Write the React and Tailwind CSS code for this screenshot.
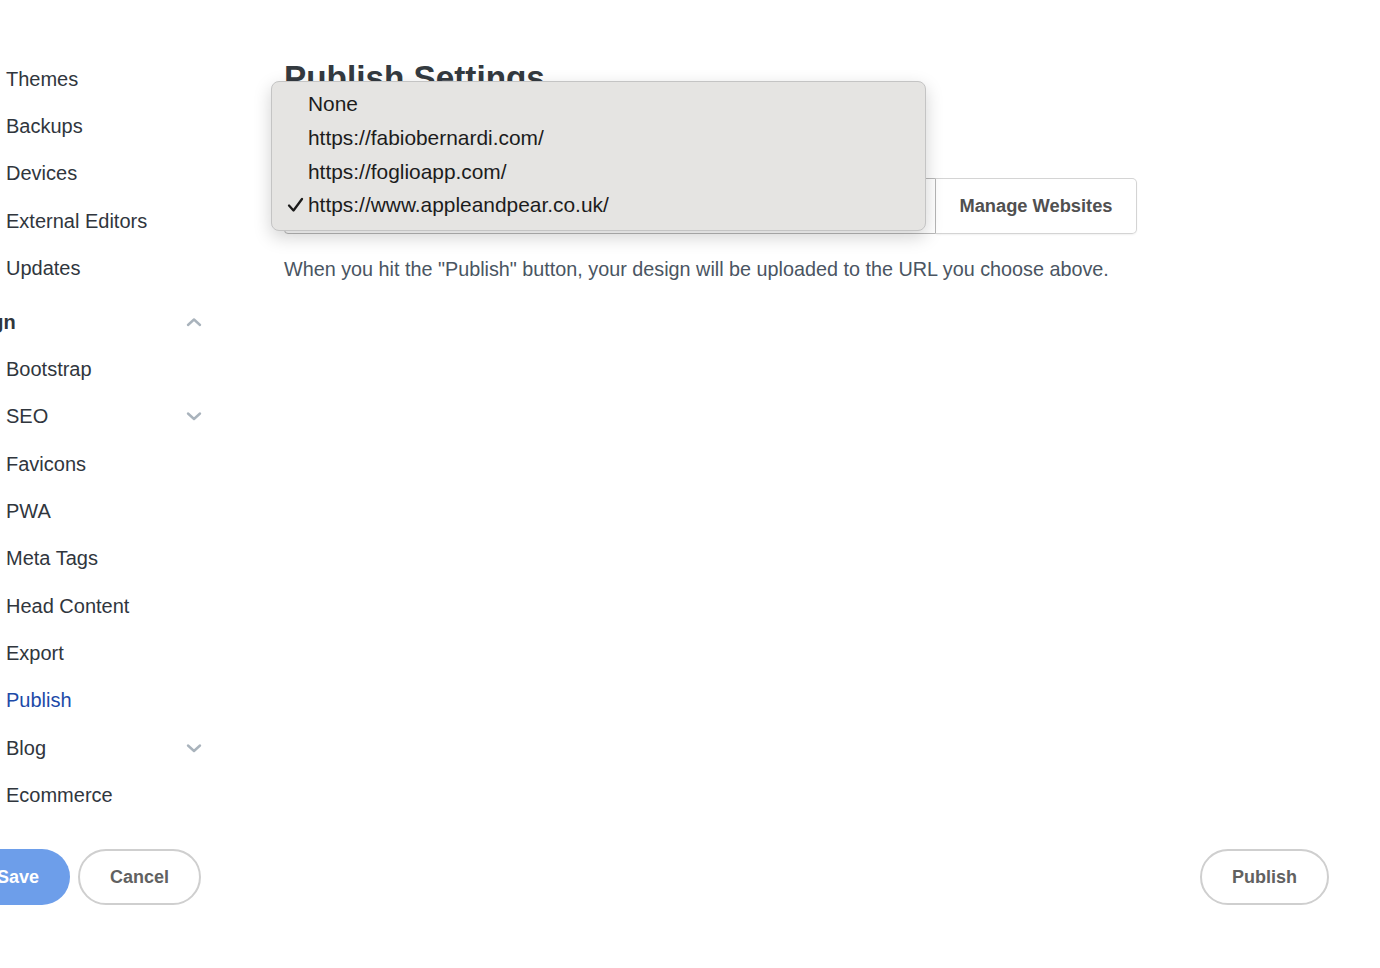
import React from "react";

const font = { fontFamily: '"Liberation Sans", Arial, Helvetica, sans-serif' };

function Chevron({ up }) {
  return (
    <svg width="16" height="10" viewBox="0 0 16 10" fill="none">
      {up ? (
        <path d="M2 8 L8 2.5 L14 8" stroke="#a9b3bc" strokeWidth="2.4" strokeLinecap="round" strokeLinejoin="round" />
      ) : (
        <path d="M2 2.5 L8 8 L14 2.5" stroke="#a9b3bc" strokeWidth="2.4" strokeLinecap="round" strokeLinejoin="round" />
      )}
    </svg>
  );
}

function Item({ label, active, chevron }) {
  return (
    <div className="h-[47.3px] flex items-center justify-between pl-[50px] pr-[8px]">
      <span className={"text-[20px] " + (active ? "text-[#1d4aa8]" : "text-[#30363d]")}>{label}</span>
      {chevron && <Chevron />}
    </div>
  );
}

export default function App() {
  const top = ["Themes", "Backups", "Devices", "External Editors", "Updates"];
  return (
    <div className="w-[1380px] h-[968px] bg-white flex flex-col overflow-hidden" style={font}>
      <div className="flex-1 flex">
        <div className="w-[254px] shrink-0 ml-[-44px] pt-[55px]">
          {top.map((t) => (
            <Item key={t} label={t} />
          ))}
          <div className="h-[47px] mt-[7px] flex items-center justify-between pr-[8px]">
            <span className="ml-[-7px] text-[20px] font-bold text-[#30363d]">Design</span>
            <Chevron up />
          </div>
          <Item label="Bootstrap" />
          <Item label="SEO" chevron />
          <Item label="Favicons" />
          <Item label="PWA" />
          <Item label="Meta Tags" />
          <Item label="Head Content" />
          <Item label="Export" />
          <Item label="Publish" active />
          <Item label="Blog" chevron />
          <Item label="Ecommerce" />
        </div>
        <div className="ml-[74px] pt-[57px] relative">
          <h1 className="text-[33.3px] leading-[41px] font-bold text-[#343a40]">Publish Settings</h1>
          <div className="mt-[80px] flex">
            <div className="w-[652px] h-[56px] border border-[#b9b9b9] rounded-l-[4px] bg-white"></div>
            <div className="w-[201px] h-[56px] border border-l-0 border-[#d4d4d4] rounded-r-[5px] flex items-center justify-center text-[18.3px] font-bold text-[#505050] shadow-[0_1px_2px_rgba(0,0,0,0.06)]">
              Manage Websites
            </div>
          </div>
          <p className="mt-[24px] text-[19.8px] leading-[23px] text-[#4a5562] whitespace-nowrap">
            When you hit the "Publish" button, your design will be uploaded to the URL you choose above.
          </p>

          <div className="absolute left-[-13px] top-[81px] w-[655px] h-[150px] bg-[#e5e4e2] border border-[#c4c4c4] rounded-[8px] shadow-[0_6px_18px_rgba(0,0,0,0.18)] pt-[5px] pb-[10px]">
            {["None", "https://fabiobernardi.com/", "https://foglioapp.com/", "https://www.appleandpear.co.uk/"].map((u, i) => (
              <div key={u} className="h-[33.7px] flex items-center relative">
                {i === 3 && (
                  <svg className="absolute left-[15px] top-[9px]" width="17" height="16" viewBox="0 0 17 16" fill="none">
                    <path d="M2 8.5 L6.5 13.5 L15 2" stroke="#1b1b1b" strokeWidth="2.3" strokeLinecap="round" strokeLinejoin="round" />
                  </svg>
                )}
                <span className="ml-[36px] text-[20.9px] text-[#1c1c1c]">{u}</span>
              </div>
            ))}
          </div>
        </div>
      </div>
      <div className="h-[56px] mb-[63px] flex justify-between items-center">
        <div className="flex gap-[8px] ml-[-34px]">
          <div className="w-[104px] h-[56px] rounded-full bg-[#6d9eea] text-white text-[18px] font-bold flex items-center justify-center">Save</div>
          <div className="w-[123px] h-[56px] rounded-full border-2 border-[#cfcfcf] text-[#616161] text-[18px] font-bold flex items-center justify-center">Cancel</div>
        </div>
        <div className="w-[129px] h-[56px] mr-[51px] rounded-full border-2 border-[#cfcfcf] text-[#616161] text-[18px] font-bold flex items-center justify-center">Publish</div>
      </div>
    </div>
  );
}
